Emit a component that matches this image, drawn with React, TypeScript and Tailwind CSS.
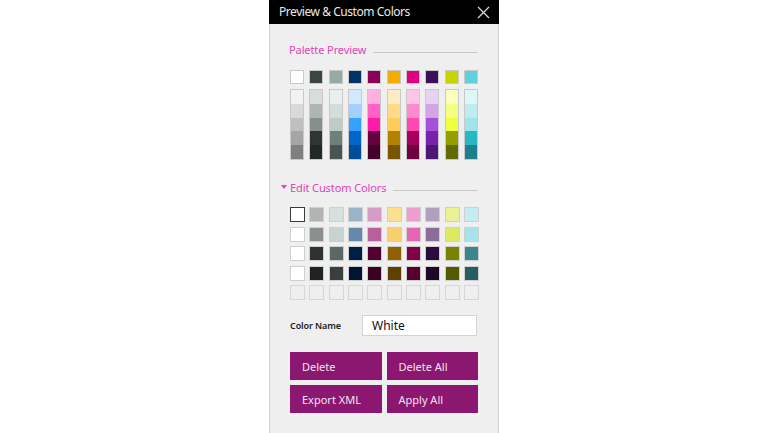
import React from "react";

const top = ["#ffffff", "#3d4543", "#96aaa6", "#013366", "#8a0057", "#f3ad00", "#de0080", "#3a1257", "#c5d500", "#5fd0dc"];

const bars: string[][] = [
  ["#f2f2f2", "#d9d9d9", "#bfbfbf", "#a6a6a6", "#808080"],
  ["#d8dcdb", "#afb5b4", "#858f8d", "#2f3533", "#232826"],
  ["#eaeeed", "#d5dddb", "#c0cbc8", "#6d807c", "#4a5553"],
  ["#d1e8ff", "#a2d0ff", "#33a3ff", "#0066cc", "#014d99"],
  ["#ffb0e0", "#ff62c4", "#ff1aa8", "#67003f", "#45002b"],
  ["#fdebc6", "#fddb8a", "#fdcd59", "#b58100", "#785500"],
  ["#ffc5e6", "#ff8bcc", "#ff49b2", "#a60060", "#6f0040"],
  ["#e6d2f3", "#d5a4e8", "#a550d6", "#7b22ac", "#4c1873"],
  ["#f9ffc0", "#f3ff80", "#eeff40", "#939f00", "#626a00"],
  ["#dff6f8", "#bfecf1", "#a0e3ea", "#2bb6c6", "#1f7f8b"],
];

const custom: string[][] = [
  ["#ffffff", "#b0b4b3", "#d8e0de", "#9ab3c9", "#d59cc5", "#fde08f", "#ef9cd0", "#b0a0c0", "#eaf094", "#c4ecf1"],
  ["#ffffff", "#8b8f8e", "#c7d3d1", "#6389ab", "#b9609c", "#f8cf6a", "#e865b5", "#8b6c9a", "#dfe862", "#a6e4ec"],
  ["#ffffff", "#2c3331", "#5b6865", "#001f45", "#52002f", "#906100", "#830048", "#2b0c3d", "#7b8100", "#3b858d"],
  ["#ffffff", "#1e2221", "#3a3e3d", "#00162f", "#3a0022", "#5e4000", "#560030", "#1e0829", "#555a00", "#275c60"],
];

const font = { fontFamily: "'Noto Sans', 'Open Sans', sans-serif" };

export default function App() {
  return (
    <div className="w-[768px] h-[433px] bg-white flex justify-center" style={font}>
      <div className="w-[230px] h-[433px] flex flex-col">
        <div className="h-[24px] bg-black flex items-center justify-between pl-[10px] pr-[9px] shrink-0">
          <span className="text-[12px] text-[#e8e8e8] tracking-[-0.45px] leading-none">Preview &amp; Custom Colors</span>
          <svg width="13" height="13" viewBox="0 0 13 13" className="text-[#d8d8d8]">
            <path d="M1 1 L12 12 M12 1 L1 12" stroke="currentColor" strokeWidth="1.3" fill="none" />
          </svg>
        </div>
        <div className="flex-1 bg-[#efefef] border-x border-[#d2d2d2] pl-[20px] pr-[20px] flex flex-col">
          {/* Palette Preview header */}
          <div className="flex items-center mt-[17px] h-[16px]">
            <span className="text-[11px] text-[#e043b9] leading-none tracking-[-0.1px] -ml-px">Palette Preview</span>
            <div className="flex-1 h-px bg-[#c8c8c8] ml-[7px] mt-[6px]" />
          </div>
          <div className="w-[188px] flex justify-between mt-[13px]">
            {top.map((c, i) => (
              <div key={i} className="w-[14px] h-[14px] border border-[#c9c9c9]" style={{ backgroundColor: c }} />
            ))}
          </div>
          <div className="w-[188px] flex justify-between mt-[5px]">
            {bars.map((b, i) => (
              <div key={i} className="w-[14px] h-[71px] border border-[#c9c9c9] flex flex-col">
                {b.map((c, j) => (
                  <div key={j} className="flex-1" style={{ backgroundColor: c }} />
                ))}
              </div>
            ))}
          </div>
          {/* Edit Custom Colors header */}
          <div className="flex items-center mt-[19px] h-[16px] -ml-[9px]">
            <svg width="6" height="4" viewBox="0 0 6 4" className="mr-[3px]">
              <path d="M0 0 L6 0 L3 4 Z" fill="#e043b9" />
            </svg>
            <span className="text-[11px] text-[#e043b9] leading-none tracking-[-0.1px]">Edit Custom Colors</span>
            <div className="flex-1 h-px bg-[#c8c8c8] ml-[7px] mt-[6px]" />
          </div>
          <div className="w-[189px] flex flex-col gap-y-[4.5px] mt-[12px]">
            {custom.map((row, r) => (
              <div key={r} className="flex justify-between">
                {row.map((c, i) =>
                  r === 0 && i === 0 ? (
                    <div key={i} className="w-[15px] h-[15px] border border-[#3a3a3a] bg-white" />
                  ) : (
                    <div key={i} className="w-[15px] h-[15px] border border-[#cfcfcf]" style={{ backgroundColor: c }} />
                  )
                )}
              </div>
            ))}
            <div className="flex justify-between">
              {Array.from({ length: 10 }).map((_, i) => (
                <div key={i} className="w-[15px] h-[15px] border border-[#d6d6d6]" />
              ))}
            </div>
          </div>
          {/* Color name */}
          <div className="flex items-center mt-[15px]">
            <span className="w-[72px] text-[9px] font-semibold text-[#222] leading-none tracking-[-0.1px]">Color Name</span>
            <div className="w-[115px] h-[21px] bg-white border border-[#d4d4d4] flex items-center pl-[9px]">
              <span className="text-[12px] text-[#111] leading-none">White</span>
            </div>
          </div>
          <div className="grid grid-cols-2 gap-[5px] w-[188px] mt-[16px]">
            {["Delete", "Delete All", "Export XML", "Apply All"].map((t) => (
              <div key={t} className="h-[28px] bg-[#8b1770] flex items-center pl-[12px]">
                <span className="text-[11px] text-[#f2e4ee] leading-none">{t}</span>
              </div>
            ))}
          </div>
        </div>
      </div>
    </div>
  );
}
